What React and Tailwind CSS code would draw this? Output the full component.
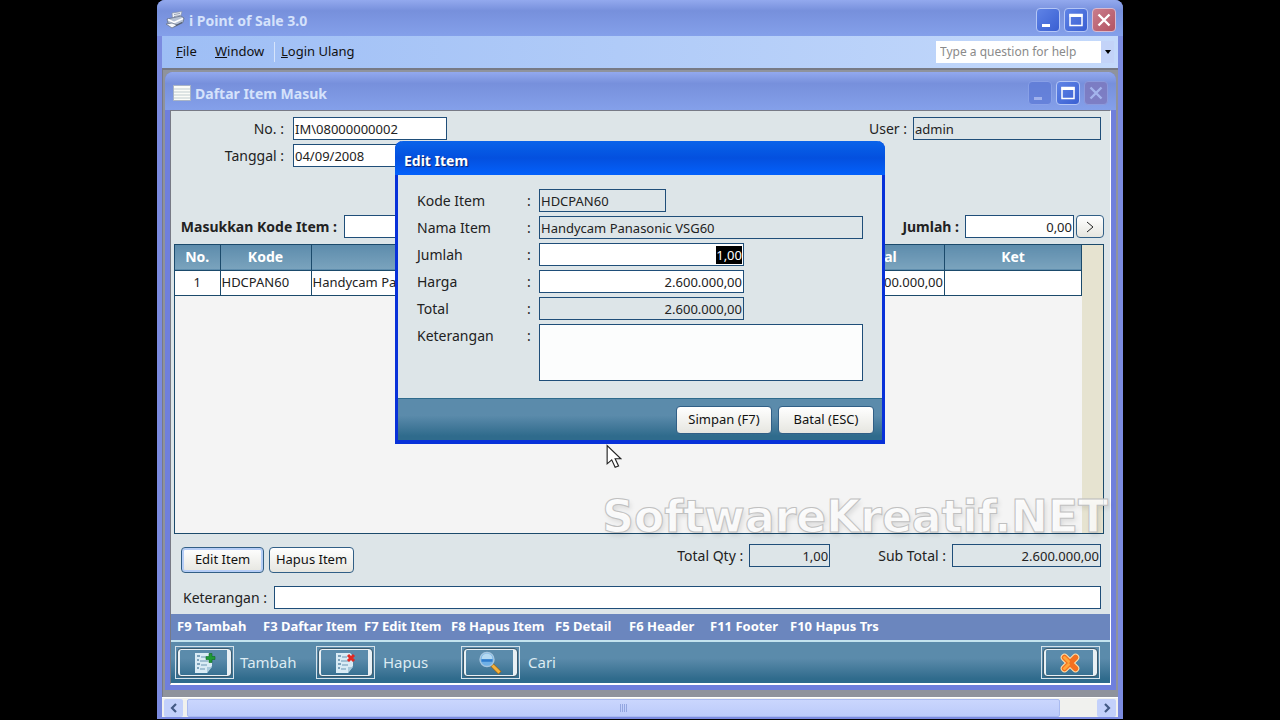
import React, { useEffect, useRef } from "react";

const shortcuts = [
  { label: "F9 Tambah", width: "w-[86px]" },
  { label: "F3 Daftar Item", width: "w-[101px]" },
  { label: "F7 Edit Item", width: "w-[87px]" },
  { label: "F8 Hapus Item", width: "w-[104px]" },
  { label: "F5 Detail", width: "w-[74px]" },
  { label: "F6 Header", width: "w-[81px]" },
  { label: "F11 Footer", width: "w-[80px]" },
  { label: "F10 Hapus Trs", width: "w-[100px]" },
];

const WindowButton = ({ kind, tone = "blue" }) => {
  const tones = {
    blue: "border-[#b4c6f6] bg-linear-to-br from-[#5f83e6] to-[#3a5fd2]",
    red: "border-[#d9b9cd] bg-linear-to-br from-[#c97c8c] to-[#b35463]",
    fadedBlue: "border-[#8ea5ea] bg-[#5b78d6] opacity-70",
    fadedRed: "border-[#8f9bdc] bg-[#7d78bd] opacity-80",
  };
  return (
    <button
      aria-label={kind}
      className={`flex size-6 items-center justify-center rounded-[4px] border ${tones[tone]}`}
    >
      <svg viewBox="0 0 20 20" className="size-5" fill="none" stroke={tone.startsWith("faded") ? "#aebcf0" : "#fff"}>
        {kind === "Minimize" && <path d="M4 15.5h8" strokeWidth="3" />}
        {kind === "Maximize" && (
          <>
            <rect x="4" y="4.5" width="12" height="11" strokeWidth="1.5" />
            <path d="M3.5 5.5h13" strokeWidth="3" />
          </>
        )}
        {kind === "Close" && <path d="M4.5 4.5l11 11M15.5 4.5l-11 11" strokeWidth="2.4" />}
      </svg>
    </button>
  );
};

const PrinterIcon = () => (
  <svg viewBox="0 0 20 20" className="h-5 w-5">
    <path d="M7 3l10-1.5-1.5 5-8 2z" fill="#eef2f8" stroke="#8792a8" strokeWidth=".7" />
    <path d="M9 4.5l6-1M9 6.5l6-1" stroke="#7f8aa0" strokeWidth=".8" />
    <path d="M2 9l14-3 3 2-1 4.5-9 4.5-6-4z" fill="#b4c0d3" stroke="#66728a" strokeWidth=".8" />
    <path d="M3 9.5l6 3 9-4" fill="none" stroke="#fff" strokeWidth="1.6" />
    <path d="M1 14l6-1 5 2-5 3z" fill="#f6f8fb" stroke="#69758c" strokeWidth=".8" />
    <path d="M11 15.5l6-3" stroke="#4f5a70" strokeWidth="1.2" />
  </svg>
);

const ListIcon = () => (
  <svg viewBox="0 0 18 16" className="h-4 w-[18px]">
    <rect x=".5" y=".5" width="17" height="15" fill="#fbfcf8" stroke="#a9b4c6" />
    <path d="M1 4h16M1 7h16M1 10h16M1 13h16" stroke="#c0cccf" />
  </svg>
);

const SheetIcon = ({ children }) => (
  <svg viewBox="0 0 24 24" className="size-6">
    <path d="M3 2h14l3 3v10l-5 7H3z" fill="#d9ebf5" />
    <path d="M15 22v-6h5z" fill="#a9cadd" />
    <path d="M5 5h3M5 9h2M5 13h3M5 17h2" stroke="#5f8aa8" strokeWidth="1.6" />
    <path d="M9 6h5M8 10h8M9 14h6M8 18h5" stroke="#8fb2c9" strokeWidth="1.3" />
    {children}
  </svg>
);

const AddIcon = () => (
  <SheetIcon>
    <path d="M17 2.5h3v3h3v3h-3v3h-3v-3h-3v-3h3z" fill="#1f9a35" stroke="#0d6a23" strokeWidth=".6" />
  </SheetIcon>
);

const DeleteIcon = () => (
  <SheetIcon>
    <path d="M15 4l6 6M21 4l-6 6" stroke="#e02822" strokeWidth="3" />
  </SheetIcon>
);

const SearchIcon = () => (
  <svg viewBox="0 0 24 24" className="size-6">
    <path d="M14 14l8 8" stroke="#9c6a1b" strokeWidth="4.5" />
    <path d="M14.5 14.5l7 7" stroke="#f4b13c" strokeWidth="3" />
    <circle cx="9" cy="8.5" r="7" fill="#6fb0e6" stroke="#a5c6e0" strokeWidth="1.4" />
    <path d="M3.500 8a5.500 5.500 0 0 1 11 0z" fill="#b5daf3" />
    <path d="M3.500 9.500h11" stroke="#2f7ccd" strokeWidth="2.500" />
  </svg>
);

const ExitIcon = () => (
  <svg viewBox="0 0 24 24" className="size-6" strokeLinecap="round">
    <path d="M6.5 6.5l11 11M17.5 6.5l-11 11" stroke="#ffe3ae" strokeWidth="7.5" />
    <path d="M6.5 6.5l11 11M17.5 6.5l-11 11" stroke="#f4701f" strokeWidth="5.5" />
    <path d="M6.5 6.5l4 4M6.5 17.500l4-4" stroke="#ffa63d" strokeWidth="3" />
  </svg>
);

const ToolButton = ({ id, label, children }) => (
  <button
    id={id}
    aria-label={label}
    className="h-[33px] w-[59px] border border-[#d5e2ea] p-0.5"
  >
    <span className="flex h-full items-center justify-center rounded-[3px] border border-r-4 border-l-2 border-[#e9f0f4] outline outline-[#3d5a6d]">
      {children}
    </span>
  </button>
);

const DialogRow = ({ id, label, children }) => (
  <div className="flex items-start">
    <label htmlFor={id} className="w-[110px] text-sm leading-[23px]">
      {label}
    </label>
    <span className="w-3 text-sm leading-[23px]">:</span>
    {children}
  </div>
);

const field = "h-[23px] border border-[#1f4e79] bg-white px-px text-[13px] text-[#222] outline-none";
const locked = "h-[23px] border border-[#1f4e79] bg-transparent px-px text-[13px] text-[#222] outline-none";
const softButton =
  "rounded-[4px] border border-[#315f86] bg-linear-to-b from-white to-[#e6e6e0] text-[13px] text-[#111]";

const EditDialog = () => {
  const amount = useRef(null);

  useEffect(() => {
    amount.current.focus();
    amount.current.select();
  }, []);

  return (
    <div
      role="dialog"
      aria-label="Edit Item"
      className="absolute top-[141px] left-[233px] w-[490px] rounded-t-lg border-x-[3px] border-b-4 border-[#0831d9] bg-[#dde5e8]"
    >
      <div className="-mx-[3px] flex h-[34px] items-center rounded-t-lg bg-linear-to-b from-[#0a63ea] via-[#0450df] to-[#0461fb] px-[9px] pt-1 text-[14px] font-bold text-white [text-shadow:1px_1px_1px_#0f1f6e]">
        Edit Item
      </div>
      <div className="flex h-[223px] flex-col gap-1 pt-[14px] pl-[19px]">
        <DialogRow id="d-kode" label="Kode Item">
          <input id="d-kode" readOnly defaultValue="HDCPAN60" className={`${locked} w-[127px]`} />
        </DialogRow>
        <DialogRow id="d-nama" label="Nama Item">
          <input id="d-nama" readOnly defaultValue="Handycam Panasonic VSG60" className={`${locked} w-[324px]`} />
        </DialogRow>
        <DialogRow id="d-jumlah" label="Jumlah">
          <input
            id="d-jumlah"
            ref={amount}
            defaultValue="1,00"
            className={`${field} w-[205px] text-right selection:bg-black selection:text-white`}
          />
        </DialogRow>
        <DialogRow id="d-harga" label="Harga">
          <input id="d-harga" defaultValue="2.600.000,00" className={`${field} w-[205px] text-right`} />
        </DialogRow>
        <DialogRow id="d-total" label="Total">
          <input id="d-total" readOnly defaultValue="2.600.000,00" className={`${locked} w-[205px] text-right`} />
        </DialogRow>
        <DialogRow id="d-ket" label="Keterangan">
          <textarea
            id="d-ket"
            className="h-[57px] w-[324px] resize-none border border-[#1f4e79] bg-[#fcfdfd] outline-none"
          />
        </DialogRow>
      </div>
      <div className="flex h-[42px] items-center justify-end gap-1.5 border-t border-[#2f6b8c] bg-linear-to-b from-[#5b8bab] from-40% to-[#2f6b8c] to-90% pr-2">
        <button className={`${softButton} h-7 w-[96px]`}>Simpan (F7)</button>
        <button className={`${softButton} h-7 w-[96px]`}>Batal (ESC)</button>
      </div>
    </div>
  );
};

const ItemTable = () => (
  <div className="mr-[6px] ml-[3px] flex h-[290px] border border-[#1b4a6b] bg-[#f4f4f4]">
    <div className="min-w-0 grow">
      <table className="w-full table-fixed border-collapse text-[13px] text-[#222]">
        <thead>
          <tr className="h-[25px] border-b border-[#1b4a6b] bg-linear-to-b from-[#5d8cac] to-[#7aa3bd] text-sm text-white">
            <th className="w-[45px] border-r border-[#1b4a6b]">No.</th>
            <th className="w-[91px] border-r border-[#1b4a6b]">Kode</th>
            <th className="w-[250px] border-r border-[#1b4a6b]">Nama Item</th>
            <th className="w-[100px] border-r border-[#1b4a6b]">Jumlah</th>
            <th className="border-r border-[#1b4a6b]">Harga</th>
            <th className="w-[130px] border-r border-[#1b4a6b]">Total</th>
            <th className="w-[137px] border-r border-[#1b4a6b]">Ket</th>
          </tr>
        </thead>
        <tbody>
          <tr className="h-[25px] border-b border-[#1b4a6b] bg-white">
            <td className="border-r border-[#1b4a6b] text-center">1</td>
            <td className="border-r border-[#1b4a6b] px-px">HDCPAN60</td>
            <td className="border-r border-[#1b4a6b] px-px whitespace-nowrap">Handycam Panasonic VSG60</td>
            <td className="border-r border-[#1b4a6b] px-px text-right">1,00</td>
            <td className="border-r border-[#1b4a6b] px-px text-right">2.600.000,00</td>
            <td className="border-r border-[#1b4a6b] px-px text-right">2.600.000,00</td>
            <td className="border-r border-[#1b4a6b]"></td>
          </tr>
        </tbody>
      </table>
    </div>
    <div className="w-[21px] shrink-0 bg-[#e6e3d0]"></div>
  </div>
);

const ItemWindow = () => (
  <section className="rounded-t-lg border-x-[5px] border-b-[5px] border-[#6f7fdc] bg-[#dde5e8]">
    <header className="-mx-[5px] flex h-[38px] items-center gap-1 rounded-t-lg bg-linear-to-b from-[#93a9ee] via-[#7790dc] via-30% to-[#84a0ea] pt-1 pr-2 pl-2 text-[14px] font-bold text-[#d5e2fb]">
      <ListIcon />
      <h2 className="grow">Daftar Item Masuk</h2>
      <div className="flex gap-1">
        <WindowButton kind="Minimize" tone="fadedBlue" />
        <WindowButton kind="Maximize" />
        <WindowButton kind="Close" tone="fadedRed" />
      </div>
    </header>

    <div className="border-t border-r border-b-2 border-l border-[#777a86] border-r-white border-b-white">
      <div className="flex flex-col gap-1 pt-[6px] pr-[9px]">
        <div className="flex items-center">
          <label htmlFor="no" className="w-[113px] text-right text-sm">No. :</label>
          <input id="no" defaultValue="IM\08000000002" className={`${field} ml-[9px] w-[154px]`} />
          <label htmlFor="user" className="ml-auto text-sm">User :</label>
          <input id="user" readOnly defaultValue="admin" className={`${locked} ml-[6px] w-[188px]`} />
        </div>
        <div className="flex items-center">
          <label htmlFor="tanggal" className="w-[113px] text-right text-sm">Tanggal :</label>
          <input id="tanggal" defaultValue="04/09/2008" className={`${field} ml-[9px] w-[154px]`} />
        </div>
      </div>

      <div className="mt-12 mb-[6px] flex items-center pr-[6px]">
        <label htmlFor="kode" className="w-[166px] text-right text-sm font-bold">Masukkan Kode Item :</label>
        <input id="kode" className={`${field} ml-[7px] w-[220px]`} />
        <label htmlFor="jumlah" className="ml-auto text-sm font-bold">Jumlah :</label>
        <input id="jumlah" defaultValue="0,00" className={`${field} ml-[6px] w-[109px] text-right`} />
        <button aria-label="Tambah" className={`${softButton} ml-0.5 flex h-[23px] w-7 items-center justify-center`}>
          <svg viewBox="0 0 10 12" className="h-3 w-2.5" fill="none" stroke="#222">
            <path d="M2 1l6 5-6 5" />
          </svg>
        </button>
      </div>

      <ItemTable />

      <div className="mt-[10px] flex items-start pr-[9px] pl-[10px]">
        <div className="flex gap-[5px] pt-[3px]">
          <button className={`${softButton} h-[26px] w-[83px] shadow-[inset_0_0_0_2px_#b5cdf6]`}>Edit Item</button>
          <button className={`${softButton} h-[26px] w-[85px]`}>Hapus Item</button>
        </div>
        <label htmlFor="qty" className="ml-auto text-sm leading-[23px]">Total Qty :</label>
        <input id="qty" readOnly defaultValue="1,00" className={`${locked} ml-[6px] w-[81px] text-right`} />
        <label htmlFor="sub" className="ml-12 text-sm leading-[23px]">Sub Total :</label>
        <input id="sub" readOnly defaultValue="2.600.000,00" className={`${locked} ml-[6px] w-[149px] text-right`} />
      </div>

      <div className="mt-[13px] mb-[5px] flex items-center pr-[9px]">
        <label htmlFor="ket" className="w-[96px] text-right text-sm">Keterangan :</label>
        <input id="ket" className={`${field} ml-[7px] grow`} />
      </div>

      <ul className="flex h-[26px] items-center bg-[#6b86be] pl-[6px] text-[13px] font-bold whitespace-nowrap text-white">
        {shortcuts.map((item) => (
          <li key={item.label} className={item.width}>{item.label}</li>
        ))}
      </ul>

      <div className="flex h-[43px] items-center border-t-2 border-[#c3e3ee] bg-linear-to-b from-[#5b8bab] from-40% to-[#2f6b8c] to-90% pr-[10px] pl-1 text-[15px] text-[#dcebf2]">
        <ToolButton id="tambah" label="Tambah"><AddIcon /></ToolButton>
        <label htmlFor="tambah" className="ml-[6px] w-[76px]">Tambah</label>
        <ToolButton id="hapus" label="Hapus"><DeleteIcon /></ToolButton>
        <label htmlFor="hapus" className="ml-[8px] w-[78px]">Hapus</label>
        <ToolButton id="cari" label="Cari"><SearchIcon /></ToolButton>
        <label htmlFor="cari" className="mr-auto ml-[8px]">Cari</label>
        <ToolButton id="keluar" label="Keluar"><ExitIcon /></ToolButton>
      </div>
    </div>
  </section>
);

const HorizontalScroll = () => (
  <div className="flex h-[20px] items-center border-t border-white bg-[#f0f1ee]">
    <button aria-label="Scroll left" className="ml-0.5 flex h-[18px] w-[19px] items-center justify-center rounded-[2px] bg-[#c3d1fb]">
      <svg viewBox="0 0 10 10" className="size-2.5" fill="none" stroke="#435a85" strokeWidth="2.2">
        <path d="M7 1L3 5l4 4" />
      </svg>
    </button>
    <div className="ml-1 flex h-[18px] grow items-center justify-center gap-px rounded-[2px] border border-[#a9baf0] bg-linear-to-b from-[#cad6fd] to-[#bccbfa]">
      <i className="h-2 w-px bg-[#93a6e0]"></i>
      <i className="h-2 w-px bg-[#93a6e0]"></i>
      <i className="h-2 w-px bg-[#93a6e0]"></i>
      <i className="h-2 w-px bg-[#93a6e0]"></i>
    </div>
    <button aria-label="Scroll right" className="mr-0.5 ml-[37px] flex h-[18px] w-[19px] items-center justify-center rounded-[2px] bg-[#c3d1fb]">
      <svg viewBox="0 0 10 10" className="size-2.5" fill="none" stroke="#435a85" strokeWidth="2.2">
        <path d="M3 1l4 4-4 4" />
      </svg>
    </button>
  </div>
);

const App = () => {
  return (
    <div className="min-h-screen overflow-hidden bg-black px-[157px] font-['Noto_Sans',sans-serif] text-[#222]">
      <div className="relative rounded-t-lg border-x-[5px] border-b-2 border-[#7b8be0] bg-[#8f939c]">
        <header className="-mx-[5px] flex h-9 items-center gap-1 rounded-t-lg bg-linear-to-b from-[#93a9ee] via-[#7790dc] via-30% to-[#84a0ea] pt-1 pr-[7px] pl-2 text-[14px] font-bold text-[#d5e2fb]">
          <PrinterIcon />
          <h1 className="grow">i Point of Sale 3.0</h1>
          <div className="flex gap-1">
            <WindowButton kind="Minimize" />
            <WindowButton kind="Maximize" />
            <WindowButton kind="Close" tone="red" />
          </div>
        </header>

        <nav className="flex h-8 items-center bg-linear-to-r from-[#9ebef5] to-[#c4d9fb] pr-1 pl-[14px] text-[13px] text-[#111]">
          <button className="w-[39px] text-left"><u>F</u>ile</button>
          <button className="w-[59px] text-left"><u>W</u>indow</button>
          <button className="border-l border-[#d6e4fb] pl-[6px]"><u>L</u>ogin Ulang</button>
          <div className="ml-auto flex h-[22px] bg-white">
            <input
              aria-label="Type a question for help"
              placeholder="Type a question for help"
              className="w-[165px] px-1 text-[12px] outline-none placeholder:text-[#8a8a8a]"
            />
            <button aria-label="Help list" className="flex w-[13px] items-center justify-center bg-[#c3d3f8]">
              <svg viewBox="0 0 6 4" className="h-1 w-1.5"><path d="M0 0h6L3 4z" fill="#000" /></svg>
            </button>
          </div>
        </nav>

        <main className="border-t-2 border-l border-[#777a86] px-0.5 pt-0.5 pb-[7px]">
          <ItemWindow />
        </main>
        <HorizontalScroll />

        <EditDialog />

        <div className="pointer-events-none absolute top-[490px] right-[10px] font-['DejaVu_Sans',sans-serif] text-[44px] leading-[54px] font-bold text-white/80 [-webkit-text-stroke:1px_#c0c0c0] [text-shadow:2px_3px_5px_rgba(0,0,0,0.1)]">
          SoftwareKreatif.NET
        </div>

        <svg viewBox="0 0 14 22" className="pointer-events-none absolute top-[444px] left-[444px] h-[26px] w-4" fill="#fff" stroke="#222">
          <path d="M1 1v16l4-3.5 3 6.5 3-1.2-3-6.3h5z" />
        </svg>
      </div>
    </div>
  );
};

export default App;
